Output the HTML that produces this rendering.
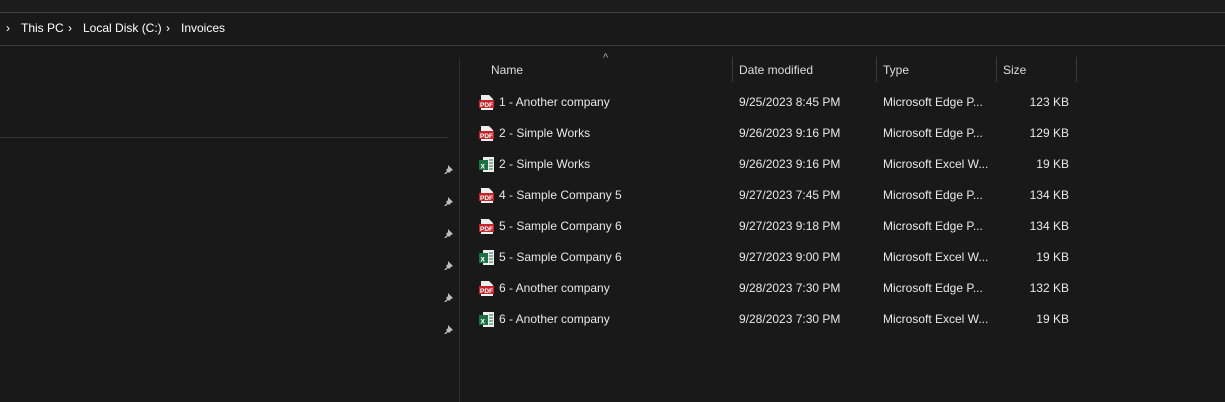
<!DOCTYPE html><html><head><style>
body{margin:0;width:1225px;height:402px;background:#191919;font-family:"Segoe UI","Liberation Sans",sans-serif;font-size:12px;color:#fff;position:relative;overflow:hidden}
.a{position:absolute}
.h{position:absolute;top:63px;color:#dcdcdc;font-size:12px}
.sep{position:absolute;top:57px;width:1px;height:25px;background:#3a3a3a}
.r{position:absolute;left:0;height:20px;width:1225px;color:#e8e8e8}
.r span{position:absolute;top:0}
.ic{position:absolute;left:479px;top:-1px;width:16px;height:17px}
.pin{position:absolute;left:444px;width:9px;height:9px}
.b{position:absolute;top:21px;font-size:12px;color:#fff}
</style></head><body>
<div class="a" style="left:0;top:0;width:1225px;height:12px;background:#1c1c1c"></div>
<div class="a" style="left:0;top:12px;width:1225px;height:1px;background:#3d3d3d"></div>
<div class="a" style="left:0;top:45px;width:1225px;height:1px;background:#3d3d3d"></div>
<div class="b" style="left:6px">›</div><div class="b" style="left:21px">This PC</div>
<div class="b" style="left:68px">›</div><div class="b" style="left:83px">Local Disk (C:)</div>
<div class="b" style="left:166px">›</div><div class="b" style="left:181px">Invoices</div>
<div class="a" style="left:0;top:137px;width:448px;height:1px;background:#333"></div>
<div class="a" style="left:459px;top:58px;width:1px;height:344px;background:#2e2e2e"></div>
<div class="h" style="left:491px">Name</div>
<div class="a" style="left:603px;top:52px;color:#aaa;font-size:11px">^</div>
<div class="sep" style="left:732px"></div><div class="h" style="left:739px">Date modified</div>
<div class="sep" style="left:876px"></div><div class="h" style="left:883px">Type</div>
<div class="sep" style="left:996px"></div><div class="h" style="left:1003px">Size</div>
<div class="sep" style="left:1076px"></div>
<svg width="0" height="0" style="position:absolute"><defs>
<g id="pdf"><path d="M2 1h8l4 4v11H2z" fill="#eee"/><rect x="0" y="6" width="15" height="8" fill="#c3252a"/><text x="1" y="13" font-size="6.5" font-family="Liberation Sans" font-weight="bold" fill="#fff">PDF</text></g>
<g id="xl"><path d="M4 1h11v15H4z" fill="#eee"/><path d="M10 4h4M10 7h4M10 10h4M10 13h4" stroke="#217346"/><rect x="0" y="4" width="9" height="10" fill="#1d7044"/><text x="1.5" y="12.5" font-size="8" font-family="Liberation Sans" font-weight="bold" fill="#fff">x</text></g>
<g id="pn"><path d="M4 0l5 5-2 1-2 2-1-1-3 3-1-1 3-3-1-1 2-2z" fill="#bbb"/></g>
</defs></svg>
<div class="r" style="top:95px"><svg class="ic"><use href="#pdf"/></svg><span style="left:499px">1 - Another company</span><span style="left:739px">9/25/2023 8:45 PM</span><span style="left:883px">Microsoft Edge P...</span><span style="right:156px">123 KB</span></div>
<div class="r" style="top:126px"><svg class="ic"><use href="#pdf"/></svg><span style="left:499px">2 - Simple Works</span><span style="left:739px">9/26/2023 9:16 PM</span><span style="left:883px">Microsoft Edge P...</span><span style="right:156px">129 KB</span></div>
<div class="r" style="top:157px"><svg class="ic"><use href="#xl"/></svg><span style="left:499px">2 - Simple Works</span><span style="left:739px">9/26/2023 9:16 PM</span><span style="left:883px">Microsoft Excel W...</span><span style="right:156px">19 KB</span></div>
<div class="r" style="top:188px"><svg class="ic"><use href="#pdf"/></svg><span style="left:499px">4 - Sample Company 5</span><span style="left:739px">9/27/2023 7:45 PM</span><span style="left:883px">Microsoft Edge P...</span><span style="right:156px">134 KB</span></div>
<div class="r" style="top:219px"><svg class="ic"><use href="#pdf"/></svg><span style="left:499px">5 - Sample Company 6</span><span style="left:739px">9/27/2023 9:18 PM</span><span style="left:883px">Microsoft Edge P...</span><span style="right:156px">134 KB</span></div>
<div class="r" style="top:250px"><svg class="ic"><use href="#xl"/></svg><span style="left:499px">5 - Sample Company 6</span><span style="left:739px">9/27/2023 9:00 PM</span><span style="left:883px">Microsoft Excel W...</span><span style="right:156px">19 KB</span></div>
<div class="r" style="top:281px"><svg class="ic"><use href="#pdf"/></svg><span style="left:499px">6 - Another company</span><span style="left:739px">9/28/2023 7:30 PM</span><span style="left:883px">Microsoft Edge P...</span><span style="right:156px">132 KB</span></div>
<div class="r" style="top:312px"><svg class="ic"><use href="#xl"/></svg><span style="left:499px">6 - Another company</span><span style="left:739px">9/28/2023 7:30 PM</span><span style="left:883px">Microsoft Excel W...</span><span style="right:156px">19 KB</span></div>
<svg class="pin" style="top:165px"><use href="#pn"/></svg>
<svg class="pin" style="top:197px"><use href="#pn"/></svg>
<svg class="pin" style="top:229px"><use href="#pn"/></svg>
<svg class="pin" style="top:261px"><use href="#pn"/></svg>
<svg class="pin" style="top:293px"><use href="#pn"/></svg>
<svg class="pin" style="top:325px"><use href="#pn"/></svg>
</body></html>
